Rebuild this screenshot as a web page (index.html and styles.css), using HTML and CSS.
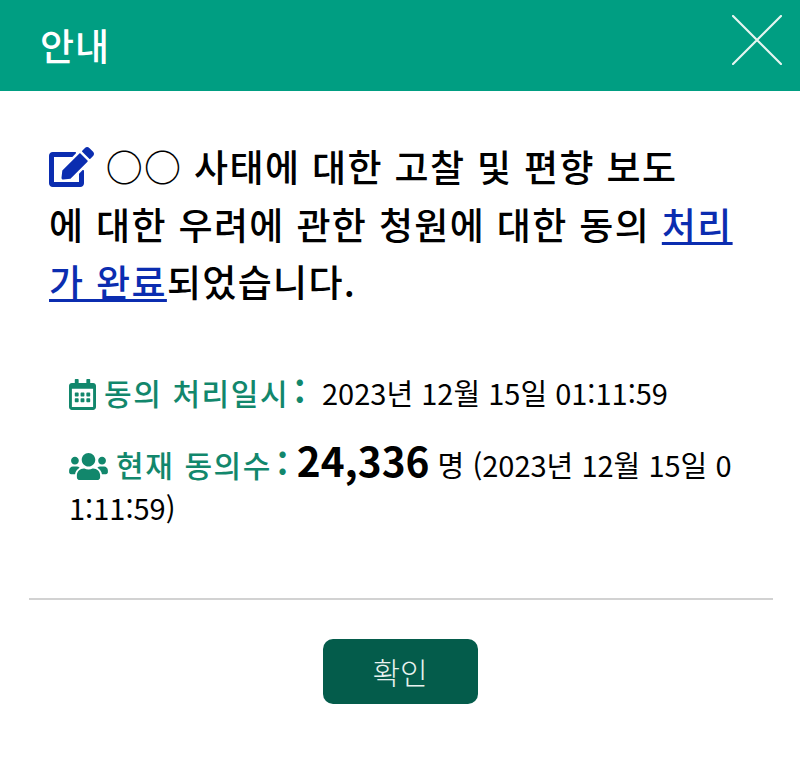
FILE: index.html
```html
<!DOCTYPE html>
<html lang="ko">
<head>
<meta charset="UTF-8">
<meta name="viewport" content="width=device-width, initial-scale=1.0">
<title>안내</title>
<link rel="stylesheet" href="styles.css">
</head>
<body>
<div class="popup">
 <header class="popup-head">
  <h1 class="popup-title">안내</h1>
  <button class="close-btn" aria-label="닫기">
   <svg viewBox="0 0 50 50" width="50" height="50"><path d="M1 1L49 49M49 1L1 49" stroke="#e6f5f1" stroke-width="2.200" stroke-linecap="round" fill="none"/></svg>
  </button>
 </header>
 <div class="popup-body">
  <p class="msg">
   <svg class="icon-edit" viewBox="0 0 576 512" width="45" height="40"><path fill="#0b2db0" d="M402.600 83.200l90.200 90.200c3.800 3.800 3.800 10 0 13.800L274.400 405.600l-92.800 10.300c-12.400 1.400-22.900-9.100-21.500-21.500l10.300-92.800L388.800 83.200c3.800-3.800 10-3.800 13.800 0zm162-22.900l-48.800-48.800c-15.200-15.200-39.900-15.200-55.200 0l-35.400 35.400c-3.800 3.800-3.800 10 0 13.800l90.200 90.200c3.800 3.800 10 3.800 13.800 0l35.400-35.400c15.200-15.300 15.200-40 0-55.200zM384 346.200V448H64V128h229.800c3.200 0 6.200-1.300 8.500-3.500l40-40c7.600-7.600 2.200-20.500-8.500-20.500H48C21.500 64 0 85.500 0 112v352c0 26.500 21.500 48 48 48h352c26.500 0 48-21.500 48-48V306.200c0-10.700-12.900-16-20.500-8.500l-40 40c-2.200 2.300-3.500 5.300-3.500 8.500z"/></svg>
   ○○ 사태에 대한 고찰 및 편향 보도<br>에 대한 우려에 관한 청원에 대한 동의 <a href="#">처리가 완료</a>되었습니다.
  </p>
  <dl class="info">
   <div class="info-row">
    <dt><svg class="icon-cal" viewBox="0 0 448 512" width="27" height="31"><path fill="#12876c" d="M148 288h-40c-6.600 0-12-5.400-12-12v-40c0-6.600 5.400-12 12-12h40c6.600 0 12 5.400 12 12v40c0 6.600-5.400 12-12 12zm108-12v-40c0-6.600-5.400-12-12-12h-40c-6.600 0-12 5.400-12 12v40c0 6.600 5.400 12 12 12h40c6.600 0 12-5.400 12-12zm96 0v-40c0-6.600-5.400-12-12-12h-40c-6.600 0-12 5.400-12 12v40c0 6.600 5.400 12 12 12h40c6.600 0 12-5.400 12-12zm-96 96v-40c0-6.600-5.400-12-12-12h-40c-6.600 0-12 5.400-12 12v40c0 6.600 5.400 12 12 12h40c6.600 0 12-5.400 12-12zm-96 0v-40c0-6.600-5.400-12-12-12h-40c-6.600 0-12 5.400-12 12v40c0 6.600 5.400 12 12 12h40c6.600 0 12-5.400 12-12zm192 0v-40c0-6.600-5.400-12-12-12h-40c-6.600 0-12 5.400-12 12v40c0 6.600 5.400 12 12 12h40c6.600 0 12-5.400 12-12zm96-260v352c0 26.500-21.500 48-48 48H48c-26.500 0-48-21.500-48-48V112c0-26.500 21.500-48 48-48h48V12c0-6.600 5.400-12 12-12h40c6.600 0 12 5.400 12 12v52h128V12c0-6.600 5.400-12 12-12h40c6.600 0 12 5.400 12 12v52h48c26.500 0 48 21.500 48 48zm-48 346V160H48v298c0 3.300 2.700 6 6 6h340c3.300 0 6-2.700 6-6z"/></svg> 동의 처리일시<span class="colon">:</span></dt>
    <dd class="date">2023년 12월 15일 01:11:59</dd>
   </div>
   <div class="info-row">
    <dt><svg class="icon-users" viewBox="0 0 640 512" width="39" height="31"><path fill="#12876c" d="M96 224c35.300 0 64-28.700 64-64s-28.700-64-64-64-64 28.700-64 64 28.700 64 64 64zm448 0c35.300 0 64-28.700 64-64s-28.700-64-64-64-64 28.700-64 64 28.700 64 64 64zm32 32h-64c-17.600 0-33.500 7.100-45.100 18.600 40.300 22.100 68.900 62 75.100 109.400h66c17.700 0 32-14.300 32-32v-32c0-35.300-28.700-64-64-64zm-256 0c61.900 0 112-50.100 112-112S381.900 32 320 32 208 82.100 208 144s50.100 112 112 112zm76.800 32h-8.300c-20.800 10-43.900 16-68.500 16s-47.600-6-68.500-16h-8.300C179.600 288 128 339.600 128 403.200V432c0 26.500 21.500 48 48 48h288c26.500 0 48-21.500 48-48v-28.800c0-63.600-51.600-115.200-115.200-115.200zm-223.700-13.400C161.500 263.100 145.600 256 128 256H64c-35.300 0-64 28.700-64 64v32c0 17.700 14.300 32 32 32h65.900c6.300-47.400 34.900-87.300 75.200-109.400z"/></svg> 현재 동의수<span class="colon">:</span></dt>
    <dd><strong class="count">24,336</strong> 명 (2023년 12월 15일 01:11:59)</dd>
   </div>
  </dl>
 </div>
 <footer class="popup-foot">
  <button class="ok-btn">확인</button>
 </footer>
</div>
</body>
</html>
```
FILE: styles.css
```css
body{margin:0;background:#fff;color:#000;font-family:"Noto Sans CJK KR","Noto Sans",sans-serif}
.popup{width:800px}
.popup-head{display:flex;justify-content:space-between;align-items:flex-start;height:91px;background:#009e82;padding:15px 18px 0 40px;box-sizing:border-box}
.popup-title{margin:0;font-size:37px;line-height:60px;font-weight:500;letter-spacing:1px;color:#fff}
.close-btn{display:flex;padding:0;border:0;background:none}
.popup-body{padding:47px 49px 0}
.msg{margin:0;font-size:37px;line-height:57.500px;font-weight:500;letter-spacing:1.350px;word-break:break-all}
.msg a{color:#0b2db0;text-decoration:underline}
.icon-edit{vertical-align:-5px}
.info{margin:60px 16px 0 20px;font-size:29px}
.info-row{margin-bottom:24px;line-height:43px}
.info-row dt{display:inline;color:#12876c;font-size:30px;font-weight:500;letter-spacing:1.600px}
.info-row dd{display:inline;margin:0;word-break:break-all}
.info-row dd.date{margin-left:7px}
.colon{display:inline-block;margin-left:5px;font-size:34px;font-weight:700;line-height:1}
.icon-cal,.icon-users{vertical-align:-5px;margin-right:-2px}
.count{margin-left:-1px;font-size:40.500px;font-weight:700}
.popup-foot{margin:69px 27px 0 29px;padding-top:39px;border-top:2px solid #d2d2d2;display:flex;justify-content:center}
.ok-btn{width:155px;height:65px;margin-right:2px;background:#045c4b;color:#e8f2ef;border:0;border-radius:10px;font-family:inherit;font-size:30px;font-weight:300}
```
